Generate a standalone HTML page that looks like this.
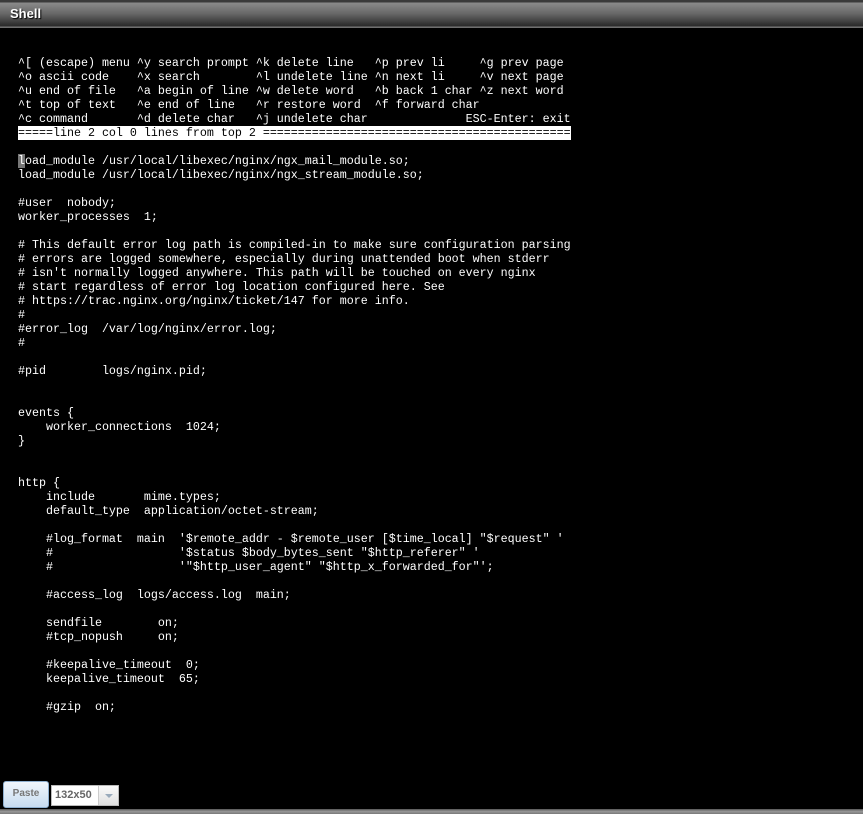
<!DOCTYPE html>
<html><head><meta charset="utf-8"><style>
html,body{margin:0;padding:0;background:#000;width:863px;height:814px;overflow:hidden;}
.hdr{position:absolute;left:0;top:0;width:863px;height:28px;background:linear-gradient(#3a3a3a 0,#3a3a3a 2px,#8a8a8a 3px,#666 14px,#333 24px,#2a2a2a 26px,#777 27px,#666 28px);}
.hdr span{position:absolute;left:10px;top:6px;font:bold 13px "Liberation Sans",sans-serif;color:#fff;text-shadow:1px 1px 1px #000;}
pre{position:absolute;left:18px;top:56px;margin:0;font:11.67px/14px "Liberation Mono",monospace;color:#fff;letter-spacing:0;}
.st{background:#fff;color:#000;}
.cur{background:#777;}
.bot{position:absolute;left:0;top:809px;width:863px;height:5px;background:linear-gradient(#555,#999,#777);}
.paste{position:absolute;left:3px;top:781px;width:44px;height:25px;border:1px solid #8fb0d0;border-radius:3px;background:linear-gradient(#f0f6fc,#c8dcf0);font:bold 10px "Liberation Sans",sans-serif;color:#777;text-align:center;line-height:24px;}
.sel{position:absolute;left:51px;top:785px;width:66px;height:19px;border:1px solid #bbb;background:#fff;font:bold 11px "Liberation Sans",sans-serif;color:#666;line-height:19px;}
.sel span{padding-left:3px;}
.sel .dd{position:absolute;right:0;top:0;width:19px;height:19px;border-left:1px solid #ccc;background:linear-gradient(#fafafa,#e0e0e0);}
.sel .dd:after{content:"";position:absolute;left:6px;top:8px;border-left:4px solid transparent;border-right:4px solid transparent;border-top:4px solid #9ab;}
</style></head><body>
<div class="hdr"><span>Shell</span></div>
<pre>^[ (escape) menu ^y search prompt ^k delete line   ^p prev li     ^g prev page
^o ascii code    ^x search        ^l undelete line ^n next li     ^v next page
^u end of file   ^a begin of line ^w delete word   ^b back 1 char ^z next word
^t top of text   ^e end of line   ^r restore word  ^f forward char
^c command       ^d delete char   ^j undelete char              ESC-Enter: exit
<span class="st">=====line 2 col 0 lines from top 2 ============================================</span>

<span class="cur">l</span>oad_module /usr/local/libexec/nginx/ngx_mail_module.so;
load_module /usr/local/libexec/nginx/ngx_stream_module.so;

#user  nobody;
worker_processes  1;

# This default error log path is compiled-in to make sure configuration parsing
# errors are logged somewhere, especially during unattended boot when stderr
# isn't normally logged anywhere. This path will be touched on every nginx
# start regardless of error log location configured here. See
# https://trac.nginx.org/nginx/ticket/147 for more info.
#
#error_log  /var/log/nginx/error.log;
#

#pid        logs/nginx.pid;


events {
    worker_connections  1024;
}


http {
    include       mime.types;
    default_type  application/octet-stream;

    #log_format  main  '$remote_addr - $remote_user [$time_local] "$request" '
    #                  '$status $body_bytes_sent "$http_referer" '
    #                  '"$http_user_agent" "$http_x_forwarded_for"';

    #access_log  logs/access.log  main;

    sendfile        on;
    #tcp_nopush     on;

    #keepalive_timeout  0;
    keepalive_timeout  65;

    #gzip  on;
</pre>
<div class="paste">Paste</div>
<div class="sel"><span>132x50</span><div class="dd"></div></div>
<div class="bot"></div>
</body></html>
